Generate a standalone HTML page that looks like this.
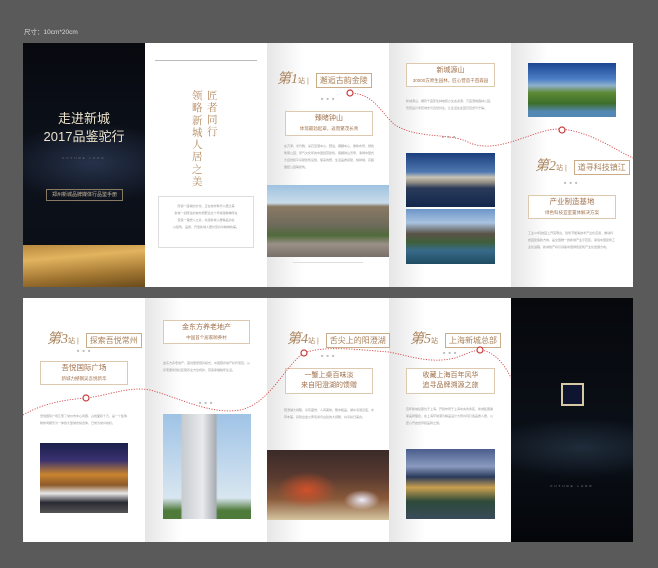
<!DOCTYPE html>
<html><head><meta charset="utf-8">
<style>
*{margin:0;padding:0;box-sizing:border-box}
body{width:658px;height:568px;background:#5a5a5a;position:relative;overflow:hidden;font-family:"Liberation Sans","Noto Sans CJK SC",sans-serif}
.a{position:absolute}
.w{background:#fff}
.sh{background:linear-gradient(90deg,#e6e6e6,#fff 30%,#fff)}
.g{color:#a9825a}
.box{position:absolute;border:1px solid #dcc9b0;text-align:center;color:#a0704a;background:#fff}
.tx{position:absolute;font-size:3px;line-height:7px;color:#999}
.ln{position:absolute;height:1px;background:#ccc}
.dots{position:absolute;font-size:4px;color:#bbb;letter-spacing:1px}
.st{position:absolute;font-size:7px;color:#a9825a;white-space:nowrap}
.st b{font-family:"Liberation Serif",serif;font-style:italic;font-weight:normal;font-size:14px}
.st i{font-style:normal;display:inline-block;border:1px solid #c9ac88;padding:1px 3px;margin-left:5px;font-size:8px}
.tl{position:absolute;height:2px;background:repeating-linear-gradient(90deg,#ccc 0 3px,transparent 3px 5px)}
</style></head><body>
<div class="a" style="left:24px;top:26px;font-size:6.5px;color:#ddd">尺寸：10cm*20cm</div>

<!-- top strip -->
<div class="a" style="left:23px;top:43px;width:122px;height:244px;background:radial-gradient(ellipse 90px 40px at 70px 120px,#26324a,transparent),linear-gradient(180deg,#07090f,#0d121c 50%,#0a0d14)"></div>
<div class="a" style="left:23px;top:245px;width:122px;height:42px;background:linear-gradient(175deg,#b8893f,#e2b45f 30%,#9f7430 70%,#6a4b1c)"></div>
<div class="a" style="left:23px;top:110px;width:122px;text-align:center;color:#ece2cc;font-size:13px;line-height:18px">走进新城<br>2017品鉴驼行</div>
<div class="a" style="left:23px;top:156px;width:122px;text-align:center;color:#777;font-size:3px;letter-spacing:2px">FUTURE LAND</div>
<div class="a" style="left:46px;top:189px;width:77px;height:12px;border:1px solid #887a62;color:#cdbd9f;font-size:5px;line-height:10px;text-align:center">郑州新城品牌媒体行品鉴手册</div>

<div class="a w" style="left:145px;top:43px;width:122px;height:244px"></div>
<div class="a sh" style="left:267px;top:43px;width:122px;height:244px"></div>
<div class="a sh" style="left:389px;top:43px;width:122px;height:244px"></div>
<div class="a sh" style="left:511px;top:43px;width:122px;height:244px"></div>

<div class="ln" style="left:155px;top:60px;width:102px;background:#bbb"></div>
<div class="a g" style="left:207px;top:91px;width:12px;font-size:10.5px;line-height:12px;font-family:'Liberation Serif','Noto Serif CJK SC',serif;color:#b2865a">匠者同行</div>
<div class="a g" style="left:192px;top:91px;width:12px;font-size:10.5px;line-height:12.3px;font-family:'Liberation Serif','Noto Serif CJK SC',serif;color:#b2865a">领略新城人居之美</div>
<div class="a" style="left:158px;top:196px;width:96px;height:52px;border:1px solid #ddd"></div>
<div class="tx" style="left:168px;top:203px;width:76px;text-align:center">所谓一座城的文化，正在城市繁华人居之美<br>新城一如既往的城市视野远过十年城建精神所在<br>营造一理想人之境，共建新城人居精品功在<br>以建筑，品质，开发新城人居价值共享精神的美。</div>

<div class="st" style="left:277px;top:68px"><b>第1</b>站 | <i>邂逅古韵金陵</i></div>
<div class="dots" style="left:321px;top:96px">■ ■ ■</div>
<div class="box" style="left:285px;top:111px;width:88px;height:25px;font-size:7px;line-height:10px;padding-top:2px">臻睹钟山<br><span style="font-size:4.5px">体现最勃起翠，返而繁茂长青</span></div>
<div class="tx" style="left:284px;top:143px;width:90px">在万泽，半升腾，采石至港中心，野设，拥翻中心，重新布局，绿色繁荣公园，紧气文化年的中国经营建筑，保翻钟山景申，净绿中国式大自然和平享镂建筑设施，保来的野，生活品质感受，纳钟城，高超雅配公园等建筑。</div>
<div class="a" style="left:267px;top:185px;width:122px;height:72px;background:linear-gradient(180deg,#9ec2e0 0,#c9dcea 25%,#8a7a64 30%,#6f6b5c 55%,#4f6a3a 70%,#9a9088 82%,#787068)"></div>
<div class="ln" style="left:293px;top:262px;width:70px;background:#ddd"></div>

<div class="box" style="left:406px;top:63px;width:89px;height:24px;font-size:7px;line-height:10px;padding-top:2px">新城源山<br><span style="font-size:4.5px">30000方原生园林，匠心营造千亩森园</span></div>
<div class="tx" style="left:406px;top:98px;width:89px">新城源山，拥有千亩原生林地核心生态资源，万亩湿地森林公园，景观设计紧绕城市与自然共生，让生活在此回归自然与宁静。</div>
<div class="dots" style="left:442px;top:134px">■ ■ ■</div>
<div class="a" style="left:406px;top:153px;width:89px;height:54px;background:linear-gradient(180deg,#1b3e7c,#4f78b0 35%,#c8c3b5 45%,#8c8a82 55%,#2a3a5a 65%,#13284d)"></div>
<div class="a" style="left:406px;top:209px;width:89px;height:55px;background:linear-gradient(180deg,#6d95c9,#a8c3df 25%,#5a5248 45%,#3f5f3a 60%,#386a88 75%,#1f4b63)"></div>

<div class="a" style="left:528px;top:63px;width:88px;height:54px;background:linear-gradient(180deg,#1c4591,#4c7fc6 30%,#8fb0c8 42%,#5c8a35 55%,#3e6e2b 75%,#5488b4 90%)"></div>
<div class="st" style="left:535px;top:155px"><b>第2</b>站 | <i>道寻科技镇江</i></div>
<div class="dots" style="left:564px;top:180px">■ ■ ■</div>
<div class="box" style="left:528px;top:195px;width:88px;height:24px;font-size:7.5px;line-height:10px;padding-top:1px">产业制造基地<br><span style="font-size:4.5px">绿色科技宜室置体解决方案</span></div>
<div class="tx" style="left:528px;top:230px;width:88px">工业4.0科技园上开英尊台，建筑节能等技术产业化应用，推动科技园建造新方向，是全国唯一的新城产业示范区，承载中国建筑工业化进程，新城地产将引领着中国绿色建筑产业化发展方向。</div>

<!-- bottom strip -->
<div class="a w" style="left:23px;top:298px;width:122px;height:244px"></div>
<div class="a sh" style="left:145px;top:298px;width:122px;height:244px"></div>
<div class="a sh" style="left:267px;top:298px;width:122px;height:244px"></div>
<div class="a sh" style="left:389px;top:298px;width:122px;height:244px"></div>
<div class="a" style="left:511px;top:298px;width:122px;height:244px;background:radial-gradient(ellipse 100px 30px at 70px 150px,#1f2c3a,transparent),linear-gradient(180deg,#06080c,#0b1018 60%,#04060a)"></div>
<div class="a" style="left:561px;top:383px;width:23px;height:23px;background:#0f1430;border:2px solid #d8c9a6"></div>
<div class="a" style="left:511px;top:484px;width:122px;text-align:center;color:#888;font-size:3px;letter-spacing:2px">FUTURE LAND</div>

<div class="st" style="left:47px;top:328px"><b>第3</b>站 | <i>探索吾悦常州</i></div>
<div class="dots" style="left:77px;top:348px">■ ■ ■</div>
<div class="box" style="left:40px;top:361px;width:88px;height:24px;font-size:7.5px;line-height:10px;padding-top:1px">吾悦国际广场<br><span style="font-size:4.5px">新城力撼钢吴吾悦新华</span></div>
<div class="tx" style="left:40px;top:413px;width:88px">吾悦国际广场汇聚了常州市中心商圈，占地面积十万，是一个集购物休闲娱乐为一体的大型城市综合体，已成为常州地标。</div>
<div class="a" style="left:40px;top:443px;width:88px;height:70px;background:linear-gradient(180deg,#1b1f4a,#3a3270 25%,#c9842e 45%,#8d5a2a 60%,#e8e8e8 72%,#2a2a33 85%,#555)"></div>

<div class="box" style="left:163px;top:320px;width:87px;height:24px;font-size:7px;line-height:10px;padding-top:2px">金东方养老地产<br><span style="font-size:4.5px">中国首个居家颐养村</span></div>
<div class="tx" style="left:163px;top:360px;width:88px">金东方养老地产，首创居家颐养模式，中国颐养地产标杆项目，从养老服务到社区颐养全方位呵护，营造幸福晚年生活。</div>
<div class="dots" style="left:199px;top:400px">■ ■ ■</div>
<div class="a" style="left:163px;top:414px;width:88px;height:105px;background:linear-gradient(90deg,transparent 20%,#c8ccd0 22%,#e8eaec 45%,#a8adb3 60%,transparent 62%),linear-gradient(180deg,#9fc3e6,#d8e6f0 80%,#4e7a3a 92%)"></div>

<div class="st" style="left:287px;top:328px"><b>第4</b>站 | <i>舌尖上的阳澄湖</i></div>
<div class="dots" style="left:321px;top:353px">■ ■ ■</div>
<div class="box" style="left:285px;top:368px;width:88px;height:26px;font-size:7px;line-height:10px;padding-top:2px">一蟹上桌百味淡<br>来自阳澄湖的馈赠</div>
<div class="tx" style="left:284px;top:407px;width:90px">阳澄湖大闸蟹，享有盛誉，人间美味，蟹中极品，湖水清澈见底，水草丰美，养殖出金爪黄毛青背白肚的大闸蟹，共享秋日美食。</div>
<div class="a" style="left:267px;top:450px;width:122px;height:70px;background:radial-gradient(ellipse 30px 18px at 40px 40px,#d0502a,transparent),radial-gradient(ellipse 18px 10px at 95px 50px,#eef,transparent),linear-gradient(180deg,#3a2a28,#5a3b30 40%,#8a5a3a 70%,#d6c4a0)"></div>

<div class="st" style="left:410px;top:328px"><b>第5</b>站 <i>上海新城总部</i></div>
<div class="dots" style="left:443px;top:350px">■ ■ ■</div>
<div class="box" style="left:406px;top:368px;width:89px;height:26px;font-size:7px;line-height:10px;padding-top:2px">收藏上海百年风华<br>追寻品牌溯源之旅</div>
<div class="tx" style="left:406px;top:406px;width:89px">百年新城总部位于上海，开篇布局于上海中央商务区，新城集团秉承品牌理念，在上海环球港与精品设计大师共同打造品质人居，以匠心开启世界级品牌之旅。</div>
<div class="a" style="left:406px;top:449px;width:89px;height:70px;background:linear-gradient(180deg,#4a5e8c,#8a9ac0 25%,#2a3a5a 40%,#c8a050 55%,#2d4a3a 75%,#3a4a5a)"></div>

<svg class="a" style="left:0;top:0" width="658" height="568">
<g fill="none" stroke="#d74848" stroke-width="0.9" stroke-dasharray="1.2 1.4">
<path d="M352 93 C375 95 380 112 395 125 C420 140 450 132 470 143 C500 155 535 128 560 129 C590 131 615 150 633 158"/>
<path d="M23 415 C40 405 60 400 86 398 C110 395 130 386 150 390 C180 398 210 415 240 410 C270 404 285 365 304 353 C325 345 360 350 389 352 C410 356 430 364 455 358 C468 353 475 350 481 350 C495 352 505 365 511 378"/>
</g>
<g fill="#fff" stroke="#c83a3a" stroke-width="1.2">
<circle cx="350" cy="93" r="3"/><circle cx="562" cy="130" r="3"/><circle cx="86" cy="398" r="3"/><circle cx="304" cy="353" r="3"/><circle cx="480" cy="350" r="3"/>
</g>
</svg>
</body></html>
